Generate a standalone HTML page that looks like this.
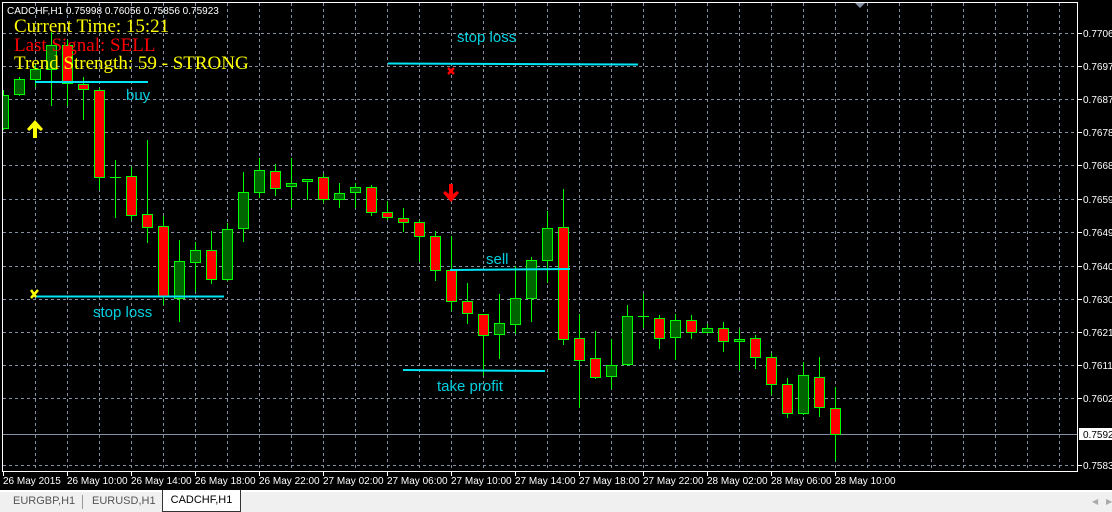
<!DOCTYPE html>
<html><head><meta charset="utf-8"><style>
html,body{margin:0;padding:0;background:#000;width:1112px;height:512px;overflow:hidden;font-family:"Liberation Sans",sans-serif}
svg{position:absolute;left:0;top:0}
.tabs{position:absolute;left:0;top:490px;width:1112px;height:22px;background:#f0f0f0;border-top:2px solid #fff;box-sizing:border-box}
.tab{position:absolute;top:3px;font-size:11px;color:#555}
.act{position:absolute;left:162px;top:-2px;width:79px;height:22px;background:#fff;border:1px solid #333;border-top:none;box-sizing:border-box;font-size:11px;color:#000;text-align:center;line-height:20px}
</style></head><body>
<svg width="1112" height="512" xmlns="http://www.w3.org/2000/svg" font-family="Liberation Sans, sans-serif">
<defs><clipPath id="c"><rect x="3" y="3" width="1074" height="468"/></clipPath></defs>
<g stroke="#8391a3" stroke-width="1" stroke-dasharray="3,3" fill="none">
<path d="M35.5 3V471M67.5 3V471M99.5 3V471M131.5 3V471M163.5 3V471M195.5 3V471M227.5 3V471M259.5 3V471M291.5 3V471M323.5 3V471M355.5 3V471M387.5 3V471M419.5 3V471M451.5 3V471M483.5 3V471M515.5 3V471M547.5 3V471M579.5 3V471M611.5 3V471M643.5 3V471M675.5 3V471M707.5 3V471M739.5 3V471M771.5 3V471M803.5 3V471M835.5 3V471M867.5 3V471M899.5 3V471M931.5 3V471M963.5 3V471M995.5 3V471M1027.5 3V471M1059.5 3V471"/>
<path d="M3 33.5H1077M3 66.5H1077M3 99.5H1077M3 132.5H1077M3 165.5H1077M3 199.5H1077M3 232.5H1077M3 266.5H1077M3 299.5H1077M3 332.5H1077M3 365.5H1077M3 398.5H1077M3 465.5H1077"/>
</g>
<line x1="3" y1="434.5" x2="1077" y2="434.5" stroke="#8391a3"/>
<g clip-path="url(#c)" stroke="#00ff00" stroke-width="1">
<g id="w">
<path d="M3.5 90V130M19.5 77V96M35.5 65V87M51.5 32V106M67.5 40V106M83.5 77V120M99.5 88V190M115.5 160V218M131.5 167V220M147.5 140V243M163.5 216V305M179.5 240V322M195.5 242V292M211.5 231V284M227.5 223V281M243.5 172V242M259.5 158V198M275.5 164V196M291.5 158V208M307.5 179V200M323.5 174V203M339.5 183V208M355.5 183V208M371.5 185V216M387.5 201V220M403.5 208V232M419.5 220V262M435.5 231V281M451.5 236V311M467.5 283V324M483.5 314V376M499.5 294V359M515.5 266V334M531.5 257V322M547.5 211V283M563.5 189V345M579.5 314V408M595.5 331V379M611.5 339V389M627.5 305V366M643.5 294V328M659.5 315V349M675.5 314V360M691.5 315V339M707.5 324V333M723.5 322V352M739.5 329V370M755.5 335V369M771.5 353V395M787.5 378V418M803.5 362V415M819.5 357V417M835.5 387V461"/>
<path d="M110 177.5H121M638 316.5H649"/>
</g>
<g fill="#006400">
<rect x="-1.5" y="95.5" width="10" height="33"/><rect x="14.5" y="79.5" width="10" height="15"/><rect x="30.5" y="69.5" width="10" height="10"/><rect x="46.5" y="45.5" width="10" height="24"/>
<rect x="174.5" y="261.5" width="10" height="37"/><rect x="190.5" y="250.5" width="10" height="12"/><rect x="222.5" y="229.5" width="10" height="50"/><rect x="238.5" y="192.5" width="10" height="36"/><rect x="254.5" y="170.5" width="10" height="22"/><rect x="286.5" y="183.5" width="10" height="3"/><rect x="302.5" y="179.5" width="10" height="2"/><rect x="334.5" y="193.5" width="10" height="6"/><rect x="350.5" y="187.5" width="10" height="5"/>
<rect x="494.5" y="323.5" width="10" height="11"/><rect x="510.5" y="298.5" width="10" height="26"/><rect x="526.5" y="260.5" width="10" height="38"/><rect x="542.5" y="228.5" width="10" height="32"/>
<rect x="606.5" y="365.5" width="10" height="11"/><rect x="622.5" y="316.5" width="10" height="48"/><rect x="670.5" y="320.5" width="10" height="17"/><rect x="702.5" y="328.5" width="10" height="4"/><rect x="734.5" y="339.5" width="10" height="2"/><rect x="798.5" y="375.5" width="10" height="38"/>
</g>
<g fill="#ff0000">
<rect x="62.5" y="45.5" width="10" height="38"/><rect x="78.5" y="84.5" width="10" height="5"/><rect x="94.5" y="90.5" width="10" height="87"/><rect x="126.5" y="176.5" width="10" height="39"/><rect x="142.5" y="214.5" width="10" height="13"/><rect x="158.5" y="226.5" width="10" height="70"/><rect x="206.5" y="250.5" width="10" height="29"/>
<rect x="270.5" y="171.5" width="10" height="17"/><rect x="318.5" y="177.5" width="10" height="22"/><rect x="366.5" y="187.5" width="10" height="25"/><rect x="382.5" y="212.5" width="10" height="5"/><rect x="398.5" y="218.5" width="10" height="4"/><rect x="414.5" y="222.5" width="10" height="14"/><rect x="430.5" y="236.5" width="10" height="34"/><rect x="446.5" y="270.5" width="10" height="31"/><rect x="462.5" y="301.5" width="10" height="12"/><rect x="478.5" y="314.5" width="10" height="21"/>
<rect x="558.5" y="227.5" width="10" height="112"/><rect x="574.5" y="338.5" width="10" height="22"/><rect x="590.5" y="358.5" width="10" height="19"/><rect x="654.5" y="318.5" width="10" height="20"/><rect x="686.5" y="320.5" width="10" height="12"/><rect x="718.5" y="328.5" width="10" height="13"/><rect x="750.5" y="338.5" width="10" height="19"/><rect x="766.5" y="357.5" width="10" height="27"/><rect x="782.5" y="384.5" width="10" height="29"/><rect x="814.5" y="377.5" width="10" height="30"/><rect x="830.5" y="408.5" width="10" height="26"/>
</g>
</g>
<g stroke="#00e5f5" stroke-width="2">
<line x1="35" y1="82" x2="148" y2="82"/>
<line x1="36" y1="296.5" x2="224" y2="296.5"/>
<line x1="388" y1="63.5" x2="638" y2="64.5"/>
<line x1="450" y1="270" x2="570" y2="269"/>
<line x1="403" y1="370" x2="545" y2="371"/>
</g>
<g fill="#00d0e0" font-size="15">
<text x="126" y="100">buy</text>
<text x="93" y="317">stop loss</text>
<text x="457" y="42">stop loss</text>
<text x="486" y="264">sell</text>
<text x="437" y="391">take profit</text>
</g>
<path d="M31 298l7 -8M31 290l5 7" stroke="#ffff00" stroke-width="2.5"/>
<path d="M448 68l6 6M454 68l-6 6" stroke="#ff0000" stroke-width="2.5"/>
<path d="M35 120l-8 9l2 2l4 -3v10h4v-10l4 3l2 -2z" fill="#ffff00"/>
<path d="M451 202l-8 -9l2 -2l4 3v-10h4v10l4 -3l2 2z" fill="#ff0000"/>
<rect x="2.5" y="2.5" width="1075" height="469" fill="none" stroke="#fff"/>
<g stroke="#fff"><path d="M3.5 472v4M67.5 472v4M131.5 472v4M195.5 472v4M259.5 472v4M323.5 472v4M387.5 472v4M451.5 472v4M515.5 472v4M579.5 472v4M643.5 472v4M707.5 472v4M771.5 472v4M835.5 472v4"/>
<path d="M1078 33.5h4M1078 66.5h4M1078 99.5h4M1078 132.5h4M1078 165.5h4M1078 199.5h4M1078 232.5h4M1078 266.5h4M1078 299.5h4M1078 332.5h4M1078 365.5h4M1078 398.5h4M1078 465.5h4"/></g>
<g fill="#fff" font-size="10">
<text x="7" y="14">CADCHF,H1  0.75998 0.76056 0.75856 0.75923</text>
<text x="1083" y="37">0.77065</text><text x="1083" y="70">0.76970</text><text x="1083" y="103">0.76875</text><text x="1083" y="136">0.76780</text><text x="1083" y="169">0.76685</text><text x="1083" y="203">0.76590</text><text x="1083" y="236">0.76495</text><text x="1083" y="270">0.76400</text><text x="1083" y="303">0.76305</text><text x="1083" y="336">0.76210</text><text x="1083" y="369">0.76115</text><text x="1083" y="402">0.76020</text><text x="1083" y="469">0.75830</text>
<text x="3" y="484">26 May 2015</text><text x="67" y="484">26 May 10:00</text><text x="131" y="484">26 May 14:00</text><text x="195" y="484">26 May 18:00</text><text x="259" y="484">26 May 22:00</text><text x="323" y="484">27 May 02:00</text><text x="387" y="484">27 May 06:00</text><text x="451" y="484">27 May 10:00</text><text x="515" y="484">27 May 14:00</text><text x="579" y="484">27 May 18:00</text><text x="643" y="484">27 May 22:00</text><text x="707" y="484">28 May 02:00</text><text x="771" y="484">28 May 06:00</text><text x="835" y="484">28 May 10:00</text>
</g>
<rect x="1079" y="428" width="33" height="12" fill="#fff"/>
<text x="1083" y="438" font-size="10" fill="#000">0.75923</text>
<path d="M855 3l5 5l5 -5z" fill="#8391a3"/>
<g font-family="Liberation Serif, serif" font-size="19">
<text x="14" y="32" fill="#ffff00">Current Time: 15:21</text>
<text x="14" y="51" fill="#ff0000">Last Signal: SELL</text>
<text x="14" y="69" fill="#ffff00">Trend Strength: 59 - STRONG</text>
</g>
</svg>
<div class="tabs">
<span class="tab" style="left:13px">EURGBP,H1</span>
<span style="position:absolute;left:82px;top:3px;width:1px;height:14px;background:#999"></span>
<span class="tab" style="left:92px">EURUSD,H1</span>
<div class="act">CADCHF,H1</div>
<span style="position:absolute;left:1092px;top:5px;font-size:8px;color:#aaa">◀</span>
<span style="position:absolute;left:1106px;top:5px;font-size:8px;color:#aaa">▶</span>
</div>
</body></html>
